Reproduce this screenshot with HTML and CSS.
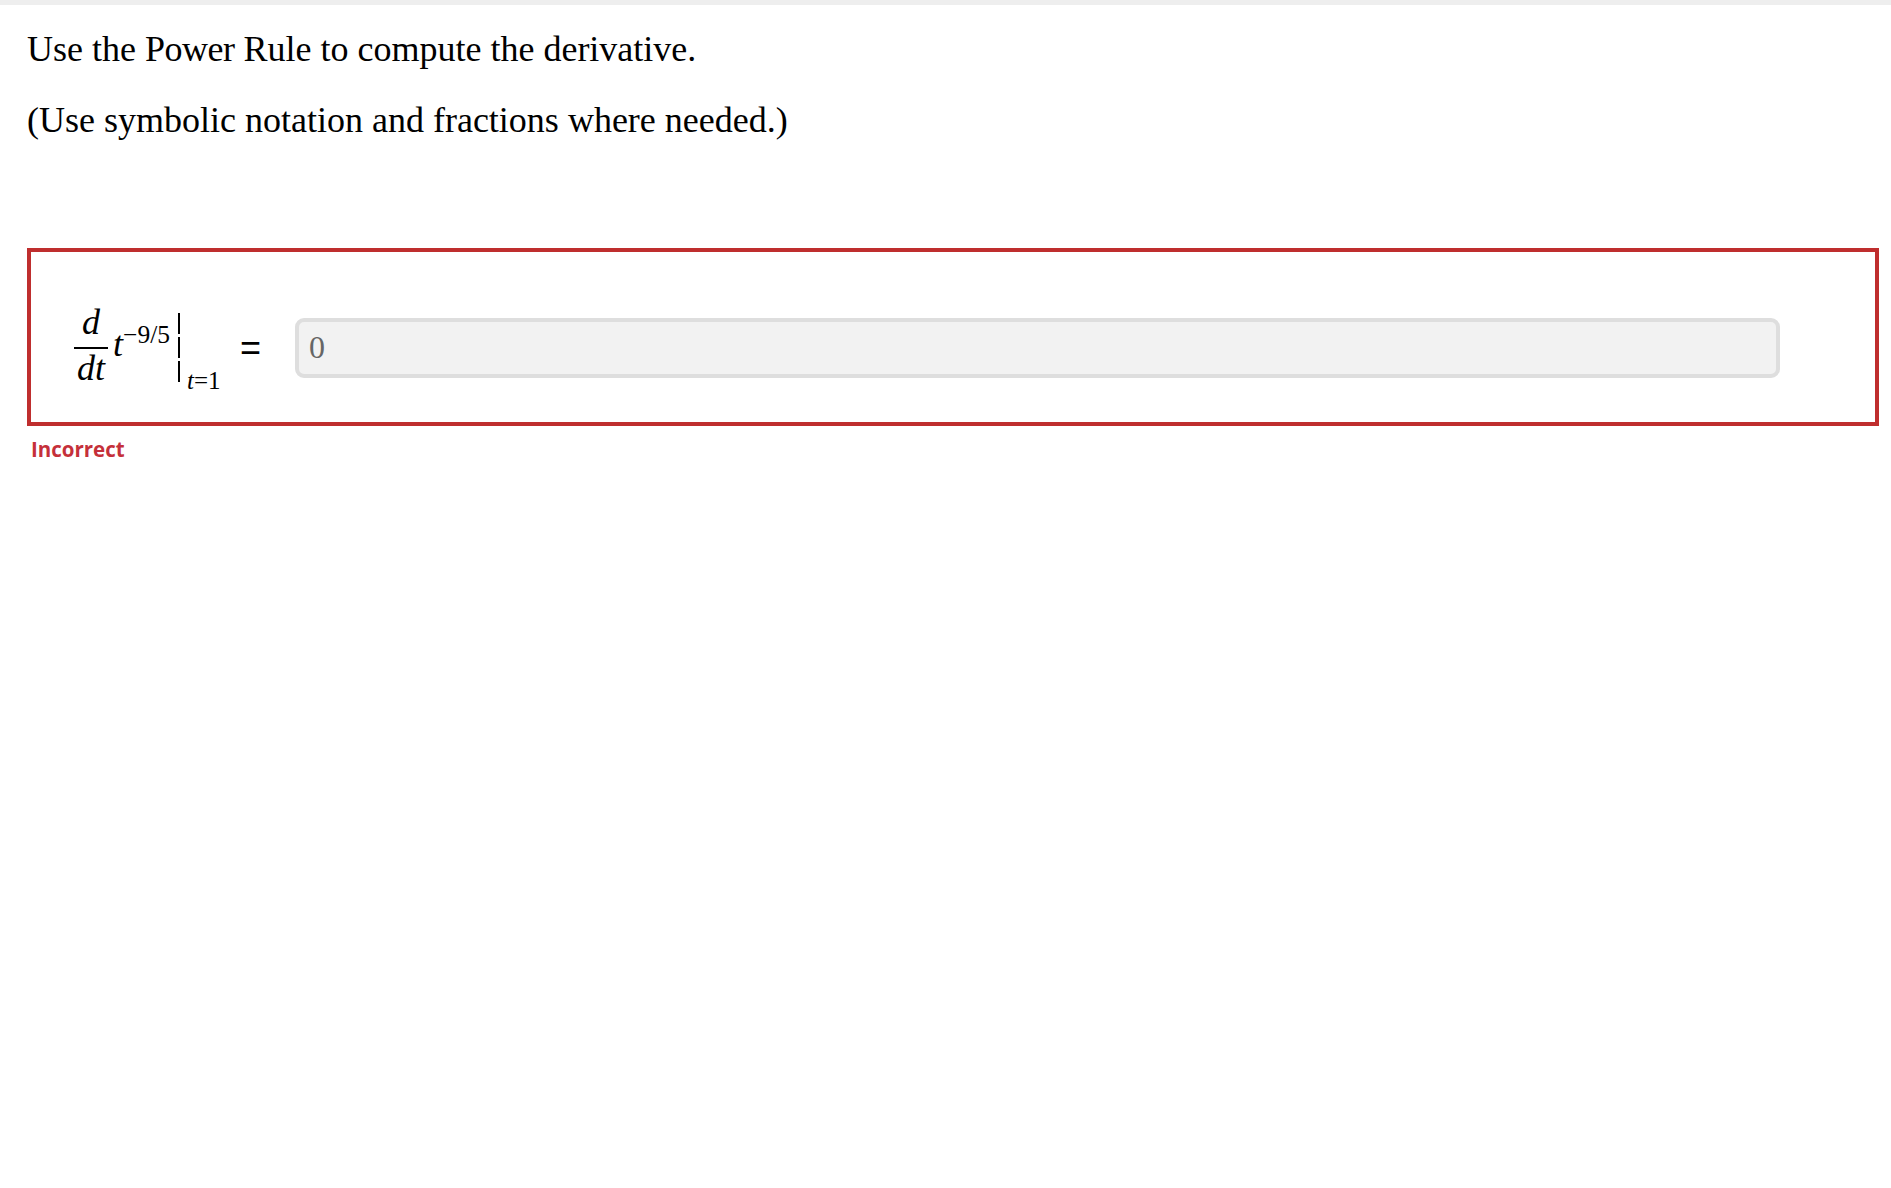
FILE: index.html
```html
<!DOCTYPE html>
<html>
<head>
  <title>Power Rule</title>
  <link rel="stylesheet" href="styles.css">
</head>
<body>

  <div class="question">
    <p class="prompt">Use the <span class="tight">Power</span> Rule to compute the derivative.</p>
    <p class="prompt">(Use symbolic notation and fractions where needed.)</p>
  </div>

  <div class="answer-box">
    <div class="math">
      <span class="frac">
        <i class="num">d</i>
        <i class="den">dt</i>
      </span>
      <i class="base">t</i>
      <span class="sup">−9/5</span>
      <span class="evalbar">
        <span></span>
        <span></span>
        <span></span>
      </span>
      <span class="sub"><i>t</i>=1</span>
    </div>
    <span class="equals">=</span>
    <input class="answer" type="text" value="0" disabled>
  </div>

  <p class="status">Incorrect</p>

</body>
</html>
```

FILE: styles.css
```css
body {
  margin: 0;
  background: #fff;
  color: #000;
  font-family: "Liberation Serif", "Times New Roman", serif;
}

.question {
  box-sizing: border-box;
  height: 248px;
  border-top: 5px solid #eeeeee;
  padding: 24px 0 0 27px;
}

.prompt {
  margin: 0 0 30px;
  font-size: 36px;
  line-height: 41px;
}

.tight {
  letter-spacing: -0.5px;
}

.answer-box {
  display: flex;
  align-items: center;
  box-sizing: border-box;
  width: 1852px;
  height: 178px;
  margin-left: 27px;
  border: 4px solid #bf2e2e;
  padding: 21px 0 0 43px;
}

.math {
  display: flex;
  align-items: flex-start;
  width: 166px;
  height: 96px;
  font-size: 36px;
}

.frac {
  display: flex;
  flex-direction: column;
  align-items: center;
  width: 34px;
  margin-top: 2px;
}

.num {
  width: 100%;
  height: 45px;
  border-bottom: 2px solid #000;
  line-height: 40px;
  text-align: center;
}

.den {
  margin-top: -1px;
  line-height: 40px;
}

.base {
  margin: 24px 0 0 5px;
  line-height: 40px;
}

.sup {
  margin: 20px 0 0 0;
  font-size: 25.5px;
  line-height: 30px;
}

.evalbar {
  display: flex;
  flex-direction: column;
  gap: 3px;
  margin: 13px 0 0 8px;
}

.evalbar span {
  display: block;
  width: 2px;
  height: 21px;
  background: #000;
}

.sub {
  margin: 66px 0 0 7px;
  font-size: 25px;
  line-height: 30px;
}

.equals {
  flex: none;
  width: 55px;
  font-family: "Liberation Sans", Arial, sans-serif;
  font-size: 36px;
  line-height: 40px;
}

.answer {
  box-sizing: border-box;
  width: 1485px;
  height: 60px;
  margin: 0;
  border: 4px solid #dedede;
  border-radius: 9px;
  background: #f2f2f2;
  padding: 0 10px;
  color: #666;
  font-family: "Liberation Serif", "Times New Roman", serif;
  font-size: 32px;
}

.status {
  margin: 8px 0 0 31px;
  color: #c5303a;
  font-family: "Open Sans", sans-serif;
  font-weight: 700;
  font-size: 20.5px;
  line-height: 30px;
}
```
